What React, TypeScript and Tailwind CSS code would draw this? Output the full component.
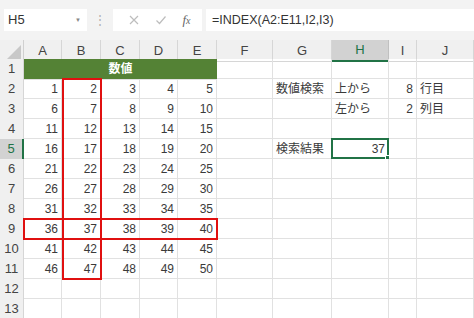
import React from 'react';

const cols = ['A', 'B', 'C', 'D', 'E', 'F', 'G', 'H', 'I', 'J'];
const gridCols = 'grid grid-cols-[24px_38px_39px_39px_38px_39px_56px_59px_57px_28px_1fr]';

// right side cells (G..J) keyed by row number
const side: Record<number, (string | null)[]> = {
  2: ['数値検索', '上から', '8', '行目'],
  3: [null, '左から', '2', '列目'],
  5: ['検索結果', '37', null, null],
};

const isNum = (v: string | null) => v !== null && /^\d+$/.test(v);

const Cell: React.FC<{ v?: string | null; selected?: boolean }> = ({ v, selected }) => (
  <div
    className={`relative h-5 border-r border-b border-[#e1e1e1] flex items-center overflow-visible whitespace-nowrap ${
      isNum(v ?? null) ? 'justify-end pr-[3px]' : 'justify-start pl-[3px]'
    }`}
  >
    {v}
    {selected && (
      <div className="absolute -left-px -top-px w-[58px] h-[21px] border-2 border-[#217346]">
        <div className="absolute -right-[3px] -bottom-[3px] w-[5px] h-[5px] bg-[#217346] border border-white" />
      </div>
    )}
  </div>
);

export default function App() {
  const rows = Array.from({ length: 12 }, (_, i) => i + 2);

  return (
    <div
      className="relative w-[474px] h-[318px] overflow-hidden bg-white text-[12px] text-[#3a3a3a]"
      style={{ fontFamily: '"Liberation Sans", "Noto Sans CJK JP", sans-serif' }}
    >
      {/* formula bar */}
      <div className="h-[40px] bg-[#f3f3f3] flex items-start pt-[9px]">
        <div className="ml-[4px] w-[83px] h-[22px] bg-white flex items-center justify-between pl-[4px] pr-[6px] text-[13px] text-[#333]">
          <span>H5</span>
          <span className="text-[6px] text-[#888]">▼</span>
        </div>
        <div className="w-[26px] h-[22px] flex items-center justify-center text-[#b0b0b0] text-[12px]">⋮</div>
        <div className="w-[89px] h-[22px] bg-white flex items-center justify-around px-[4px]">
          <svg width="12" height="12" viewBox="0 0 12 12" className="ml-[4px]">
            <path d="M2 2 L10 10 M10 2 L2 10" stroke="#bdbdbd" strokeWidth="1.2" fill="none" />
          </svg>
          <svg width="12" height="12" viewBox="0 0 12 12">
            <path d="M1.5 6.5 L4.5 9.5 L10.5 2.5" stroke="#bdbdbd" strokeWidth="1.2" fill="none" />
          </svg>
          <span
            className="italic text-[13px] text-[#666]"
            style={{ fontFamily: '"Liberation Serif", serif' }}
          >
            f<span className="text-[10px]">x</span>
          </span>
        </div>
        <div className="ml-[4px] flex-1 h-[22px] bg-white flex items-center pl-[6px] text-[12.5px] text-[#333]">
          =INDEX(A2:E11,I2,I3)
        </div>
      </div>

      {/* column headers */}
      <div className={`${gridCols} h-[19px] bg-[#f0f0f0] text-[13px] text-[#444]`}>
        <div className="border-r border-b border-[#d0d0d0] flex items-end justify-end pr-[2px] pb-[2px]">
          <div className="w-0 h-0 border-l-[14px] border-l-transparent border-b-[14px] border-b-[#c8c8c8]" />
        </div>
        {cols.map((c) =>
          c === 'H' ? (
            <div
              key={c}
              className="bg-[#d2d2d2] border-r border-[#c0c0c0] border-b-2 border-b-[#217346] flex items-center justify-center text-[#217346]"
            >
              {c}
            </div>
          ) : (
            <div key={c} className="border-r border-b border-[#d6d6d6] flex items-center justify-center">
              {c}
            </div>
          )
        )}
      </div>

      {/* row 1 */}
      <div className={`${gridCols} h-5`}>
        <div className="bg-[#f0f0f0] border-r border-b border-[#d6d6d6] flex items-center justify-center text-[13px] text-[#444]">
          1
        </div>
        <div className="col-span-5 bg-[#548235] border-b border-[#e1e1e1] flex items-center justify-center text-white font-semibold">
          数値
        </div>
        {[0, 1, 2, 3, 4].map((i) => (
          <Cell key={i} />
        ))}
      </div>

      {rows.map((r) => {
        const data = r <= 11 ? [1, 2, 3, 4, 5].map((c) => String((r - 2) * 5 + c)) : [null, null, null, null, null];
        const s = side[r] ?? [null, null, null, null];
        const sel = r === 5;
        return (
          <div key={r} className={`${gridCols} h-5`}>
            <div
              className={`border-b flex items-center justify-center text-[13px] ${
                sel
                  ? 'bg-[#d2d2d2] border-b-[#c0c0c0] border-r-2 border-r-[#217346] text-[#217346]'
                  : 'bg-[#f0f0f0] border-r border-[#d6d6d6] text-[#444]'
              }`}
            >
              {r}
            </div>
            {data.map((v, i) => (
              <Cell key={i} v={v} />
            ))}
            <Cell />
            <Cell v={s[0]} />
            <Cell v={s[1]} selected={sel} />
            <Cell v={s[2]} />
            <Cell v={s[3]} />
          </div>
        );
      })}

      {/* red highlight boxes */}
      <div className="absolute left-[62px] top-[78px] w-[40px] h-[202px] border-2 border-[#e01010]" />
      <div className="absolute left-[23px] top-[218px] w-[195px] h-[22px] border-2 border-[#e01010]" />
    </div>
  );
}
